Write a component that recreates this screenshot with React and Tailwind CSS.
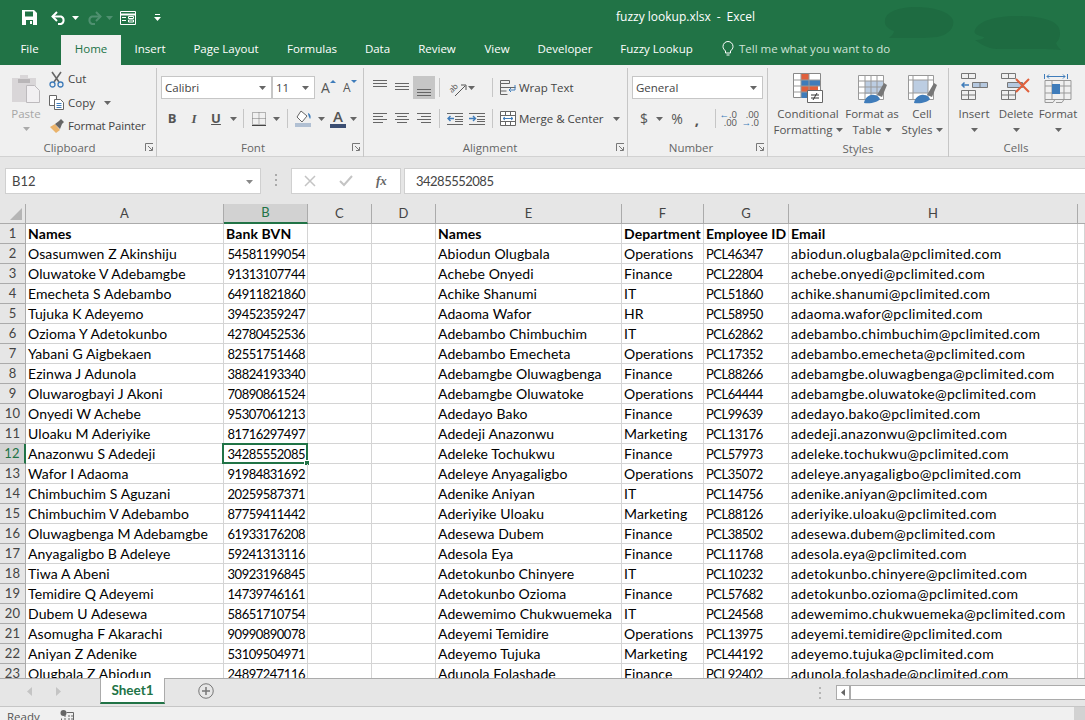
import React from "react";

const left = [
  ["Osasumwen Z Akinshiju", "54581199054"],
  ["Oluwatoke V Adebamgbe", "91313107744"],
  ["Emecheta S Adebambo", "64911821860"],
  ["Tujuka K Adeyemo", "39452359247"],
  ["Ozioma Y Adetokunbo", "42780452536"],
  ["Yabani G Aigbekaen", "82551751468"],
  ["Ezinwa J Adunola", "38824193340"],
  ["Oluwarogbayi J Akoni", "70890861524"],
  ["Onyedi W Achebe", "95307061213"],
  ["Uloaku M Aderiyike", "81716297497"],
  ["Anazonwu S Adedeji", "34285552085"],
  ["Wafor I Adaoma", "91984831692"],
  ["Chimbuchim S Aguzani", "20259587371"],
  ["Chimbuchim V Adebambo", "87759411442"],
  ["Oluwagbenga M Adebamgbe", "61933176208"],
  ["Anyagaligbo B Adeleye", "59241313116"],
  ["Tiwa A Abeni", "30923196845"],
  ["Temidire Q Adeyemi", "14739746161"],
  ["Dubem U Adesewa", "58651710754"],
  ["Asomugha F Akarachi", "90990890078"],
  ["Aniyan Z Adenike", "53109504971"],
  ["Olugbala Z Abiodun", "24897247116"],
];

const right = [
  ["Abiodun Olugbala", "Operations", "PCL46347", "abiodun.olugbala"],
  ["Achebe Onyedi", "Finance", "PCL22804", "achebe.onyedi"],
  ["Achike Shanumi", "IT", "PCL51860", "achike.shanumi"],
  ["Adaoma Wafor", "HR", "PCL58950", "adaoma.wafor"],
  ["Adebambo Chimbuchim", "IT", "PCL62862", "adebambo.chimbuchim"],
  ["Adebambo Emecheta", "Operations", "PCL17352", "adebambo.emecheta"],
  ["Adebamgbe Oluwagbenga", "Finance", "PCL88266", "adebamgbe.oluwagbenga"],
  ["Adebamgbe Oluwatoke", "Operations", "PCL64444", "adebamgbe.oluwatoke"],
  ["Adedayo Bako", "Finance", "PCL99639", "adedayo.bako"],
  ["Adedeji Anazonwu", "Marketing", "PCL13176", "adedeji.anazonwu"],
  ["Adeleke Tochukwu", "Finance", "PCL57973", "adeleke.tochukwu"],
  ["Adeleye Anyagaligbo", "Operations", "PCL35072", "adeleye.anyagaligbo"],
  ["Adenike Aniyan", "IT", "PCL14756", "adenike.aniyan"],
  ["Aderiyike Uloaku", "Marketing", "PCL88126", "aderiyike.uloaku"],
  ["Adesewa Dubem", "Finance", "PCL38502", "adesewa.dubem"],
  ["Adesola Eya", "Finance", "PCL11768", "adesola.eya"],
  ["Adetokunbo Chinyere", "IT", "PCL10232", "adetokunbo.chinyere"],
  ["Adetokunbo Ozioma", "Finance", "PCL57682", "adetokunbo.ozioma"],
  ["Adewemimo Chukwuemeka", "IT", "PCL24568", "adewemimo.chukwuemeka"],
  ["Adeyemi Temidire", "Operations", "PCL13975", "adeyemi.temidire"],
  ["Adeyemo Tujuka", "Marketing", "PCL44192", "adeyemo.tujuka"],
  ["Adunola Folashade", "Finance", "PCL92402", "adunola.folashade"],
];

const Caret = ({ color = "#666" }) => (
  <svg width="7" height="4" viewBox="0 0 7 4"><path d="M0 0h7L3.500 4z" fill={color} /></svg>
);

const Launcher = () => (
  <svg width="9" height="9" viewBox="0 0 9 9" fill="none" stroke="#777">
    <path d="M.5 8V.5H8" />
    <path d="M3 3l4 4M4 7.500h3.500V4" />
  </svg>
);

// rows of short lines, used by the alignment buttons
const Lines = ({ rows, width = 15, height = 14 }) => (
  <svg width={width} height={height} viewBox={`0 0 ${width} ${height}`} stroke="#666">
    {rows.map(([y, a, b]) => (
      <path key={y} d={`M${a} ${y + 0.5}H${b}`} />
    ))}
  </svg>
);

const GroupLabel = ({ children, launcher = true, pad = "pr-[4px]" }) => (
  <div className={`relative flex h-[20px] items-center justify-center pt-[2px] text-[11.5px] text-[#666] ${pad}`}>
    {children}
    {launcher && (
      <span className="absolute right-[2px] top-[6px] flex">
        <Launcher />
      </span>
    )}
  </div>
);

const Sep = () => <div className="h-[19px] w-px bg-[#c6c6c6]" />;

const ClipboardGroup = () => (
  <div className="flex h-[89px] w-[157px] flex-col border-r border-[#c6c6c6]">
    <div className="flex flex-1">
      <div className="flex w-[49px] flex-col items-center pl-[3px] pt-[5px] text-[11.5px] text-[#a6a6a6]">
        <svg width="30" height="30" viewBox="0 0 30 30">
          <path d="M1 5h8V2h8v3h8v24H1z" fill="#d9d6d8" />
          <path d="M7 6h12v4H7z" fill="#b9b6b8" />
          <path d="M15.500 12.500h8l5 5v12h-13z" fill="#f2f0f2" stroke="#bdbabd" />
        </svg>
        <span className="mt-[3px] leading-[16px]">Paste</span>
        <span className="mt-[5px] flex"><Caret color="#aaa" /></span>
      </div>
      <div className="flex flex-col text-[11.5px] text-[#444]">
        <div className="flex h-[22px] items-center gap-[3px]">
          <svg width="16" height="17" viewBox="0 0 16 17" fill="none">
            <path d="M3 1l7 10M12 1L5 11" stroke="#666" strokeWidth="1.600" />
            <circle cx="3.500" cy="13.500" r="2.500" stroke="#3f7cba" strokeWidth="1.300" />
            <circle cx="11.500" cy="13.500" r="2.500" stroke="#3f7cba" strokeWidth="1.300" />
          </svg>
          Cut
        </div>
        <div className="flex h-[25px] items-center gap-[3px]">
          <svg width="16" height="15" viewBox="0 0 16 15" fill="#fff" stroke="#666">
            <path d="M.5.500h7v10h-7z" />
            <path d="M5.500 4.500h6l3 3v7h-9z" />
            <path d="M7.500 8.500h5M7.500 10.500h5M7.500 12.500h5" stroke="#3f7cba" />
          </svg>
          Copy
          <span className="ml-[6px] flex"><Caret /></span>
        </div>
        <div className="flex h-[22px] items-center gap-[3px] tracking-[-0.2px]">
          <svg width="16" height="15" viewBox="0 0 16 15">
            <path d="M1 8l5-3 5 6-4 3z" fill="#eab36b" />
            <path d="M6 5l4-3 2-2 3 3-2 2-2 5z" fill="#666" />
          </svg>
          Format Painter
        </div>
      </div>
    </div>
    <GroupLabel pad="pr-[17px]">Clipboard</GroupLabel>
  </div>
);

const Combo = ({ width, children }) => (
  <div className={`flex h-[23px] items-center justify-between border border-[#c6c6c6] bg-white pl-[3px] pr-[5px] text-[11.5px] text-[#444] ${width}`}>
    {children}
    <Caret />
  </div>
);

const FontGroup = () => (
  <div className="flex h-[89px] w-[207px] flex-col border-r border-[#c6c6c6] pl-[4px]">
    <div className="flex flex-1 flex-col pt-[8px]">
      <div className="flex items-center">
        <Combo width="w-[111px]">Calibri</Combo>
        <Combo width="w-[43px]">11</Combo>
        <span className="ml-[6px] flex w-[22px] items-start text-[14px] leading-[14px] text-[#555]">
          A<span className="mt-[-1px] h-0 w-0 border-x-[3px] border-b-[3px] border-x-transparent border-b-[#3f7cba]" />
        </span>
        <span className="flex items-start text-[12px] leading-[14px] text-[#555]">
          A<span className="mt-[-1px] h-0 w-0 border-x-[3px] border-t-[3px] border-x-transparent border-t-[#3f7cba]" />
        </span>
      </div>
      <div className="mt-[10px] flex h-[19px] items-center text-[13px] text-[#555]">
        <span className="w-[22px] text-center font-bold">B</span>
        <span className="w-[22px] text-center font-['Liberation_Serif',serif] font-bold italic">I</span>
        <span className="w-[22px] text-center font-bold underline">U</span>
        <span className="ml-[3px] mr-[6px] flex"><Caret /></span>
        <Sep />
        <svg className="ml-[8px]" width="14" height="14" viewBox="0 0 14 14" stroke="#777" strokeDasharray="1 1" fill="none">
          <path d="M.5 .5h13v12H.5zM.5 6.500h13M7 .5v12" />
          <path d="M0 13.500h14" strokeDasharray="none" stroke="#444" />
        </svg>
        <span className="mx-[7px] flex"><Caret /></span>
        <Sep />
        <svg className="ml-[7px]" width="18" height="17" viewBox="0 0 18 17">
          <path d="M6 1l6 5-5 6-5-5z" fill="#fff" stroke="#666" />
          <path d="M13 3c3 1 3 5 2 6-1-2-2-4-2-6" fill="#3f7cba" />
          <path d="M0 13h16v4H0z" fill="#b1c0d3" />
        </svg>
        <span className="ml-[5px] mr-[4px] flex"><Caret /></span>
        <span className="flex w-[18px] flex-col items-center text-[15px] font-semibold leading-[13px] text-[#555]">
          A<span className="mt-[1px] h-[4px] w-[16px] bg-[#3b4e72]" />
        </span>
        <span className="ml-[3px] flex"><Caret /></span>
      </div>
    </div>
    <GroupLabel pad="pr-[18px]">Font</GroupLabel>
  </div>
);

const AlignmentGroup = () => (
  <div className="flex h-[89px] w-[264px] flex-col border-r border-[#c6c6c6] pl-[5px]">
    <div className="flex flex-1 flex-col pt-[8px]">
      <div className="flex h-[23px] items-center">
        <span className="flex h-[23px] w-[22px] justify-center pt-[4px]"><Lines rows={[[0, 0, 14], [3, 0, 14], [6, 0, 14]]} /></span>
        <span className="flex h-[23px] w-[22px] justify-center pt-[5px]"><Lines rows={[[2, 0, 14], [5, 0, 14], [8, 0, 14]]} /></span>
        <span className="flex h-[23px] w-[22px] justify-center bg-[#c6c6c6] pt-[7px]"><Lines rows={[[6, 0, 14], [9, 0, 14], [12, 0, 14]]} /></span>
        <span className="ml-[4px] mr-[7px]"><Sep /></span>
        <svg className="overflow-visible" width="20" height="18" viewBox="0 0 20 18" fill="none" stroke="#666">
          <text x="1" y="11" transform="rotate(-45 7 8)" fontSize="8" fill="#555" stroke="none">ab</text>
          <path d="M8 17l10-10M14 6h5v5" stroke="#555" />
        </svg>
        <span className="ml-[1px] mr-[17px] flex"><Caret /></span>
        <Sep />
        <svg className="ml-[7px]" width="16" height="15" viewBox="0 0 16 15" fill="none" stroke="#666">
          <path d="M.5.500h9v3h-9zM.5 3.500v11h7M.5 7.500h15M.5 11h6" />
          <path d="M15 5v5H9M11 8l-2 2 2 2" stroke="#3f7cba" />
        </svg>
        <span className="ml-[3px] whitespace-nowrap text-[11.5px] text-[#444]">Wrap Text</span>
      </div>
      <div className="mt-[10px] flex h-[19px] items-center">
        <span className="flex w-[22px] justify-center pt-[3px]"><Lines rows={[[0, 0, 14], [3, 0, 10], [6, 0, 14], [9, 0, 10]]} /></span>
        <span className="flex w-[22px] justify-center pt-[3px]"><Lines rows={[[0, 0, 14], [3, 2, 12], [6, 0, 14], [9, 2, 12]]} /></span>
        <span className="flex w-[22px] justify-center pt-[3px]"><Lines rows={[[0, 0, 14], [3, 4, 14], [6, 0, 14], [9, 4, 14]]} /></span>
        <span className="ml-[4px] mr-[7px]"><Sep /></span>
        <svg width="16" height="12" viewBox="0 0 16 12" stroke="#666" fill="none">
          <path d="M0 .5h16M8 3.500h8M8 6.500h8M8 8.500h8M0 11.500h16" />
          <path d="M7 5.500H1M3.500 3L1 5.500 3.500 8" stroke="#3f7cba" strokeWidth="1.400" />
        </svg>
        <svg className="ml-[6px]" width="16" height="12" viewBox="0 0 16 12" stroke="#666" fill="none">
          <path d="M0 .5h16M8 3.500h8M8 6.500h8M8 8.500h8M0 11.500h16" />
          <path d="M0 5.500h6M4 3l2.500 2.500L4 8" stroke="#3f7cba" strokeWidth="1.400" />
        </svg>
        <span className="mx-[7px]"><Sep /></span>
        <svg width="16" height="15" viewBox="0 0 16 15" fill="#fff" stroke="#666">
          <path d="M.5.500h15v14H.5zM.5 4.500h15M.5 10.500h15M5.500.5v4M10.500.5v4M5.500 10.500v4M10.500 10.500v4" />
          <path d="M3 7.500h10M5 6l-2 1.500L5 9M11 6l2 1.500L11 9" stroke="#3f7cba" fill="none" />
        </svg>
        <span className="ml-[3px] whitespace-nowrap text-[11.5px] text-[#444]">Merge &amp; Center</span>
        <span className="ml-[9px] flex"><Caret /></span>
      </div>
    </div>
    <GroupLabel pad="pr-[16px]">Alignment</GroupLabel>
  </div>
);

const NumberGroup = () => (
  <div className="flex h-[89px] w-[140px] flex-col border-r border-[#c6c6c6] pl-[4px]">
    <div className="flex flex-1 flex-col pt-[8px]">
      <Combo width="w-[131px]">General</Combo>
      <div className="mt-[10px] flex h-[19px] items-center text-[#555]">
        <span className="ml-[5px] w-[14px] text-center text-[14px]">$</span>
        <span className="ml-[5px] mr-[6px] flex"><Caret /></span>
        <span className="w-[16px] text-center text-[14px]">%</span>
        <span className="ml-[9px] mr-[15px] w-[6px] text-center text-[15px] font-bold leading-[10px]">,</span>
        <Sep />
        <div className="ml-[3px] flex w-[18px] flex-col items-end whitespace-nowrap text-[9.5px] leading-[8px]">
          <span><span className="text-[#3f7cba]">←</span>.0</span>
          <span>.00</span>
        </div>
        <div className="ml-[7px] flex w-[15px] flex-col items-end whitespace-nowrap text-[9.5px] leading-[8px]">
          <span>.00</span>
          <span><span className="text-[#3f7cba]">→</span>.0</span>
        </div>
      </div>
    </div>
    <GroupLabel pad="pr-[17px]">Number</GroupLabel>
  </div>
);

const CondIcon = () => (
  <svg width="31" height="31" viewBox="0 0 31 31">
    <path d="M.5.500h27v24H.5z" fill="#fff" stroke="#888" />
    <path d="M8 1h8v6H8z" fill="#e0603c" />
    <path d="M8 7h19v6H8z" fill="#3f7cba" />
    <path d="M8 13h17v6H8z" fill="#e0603c" />
    <path d="M8 19h12v6H8z" fill="#3f7cba" />
    <path d="M.5 7h27M.5 13h27M.5 19h27M8 1v24M16 1v24" stroke="#999" fill="none" />
    <path d="M14.500 17.500h15v12h-15z" fill="#fff" stroke="#666" />
    <path d="M18 22h8M18 25h8M24 20l-4 7" stroke="#333" fill="none" />
  </svg>
);

const Brush = () => (
  <g>
    <path d="M19 22l7-12 3 2-5 12z" fill="#777" />
    <path d="M6 30c1-5 5-9 10-8 3 0 5 2 6 4-2 3-9 5-16 4z" fill="#3f7cba" />
  </g>
);

const TableIcon = () => (
  <svg width="29" height="31" viewBox="0 0 29 31">
    <path d="M.5 2.500h25v24H.5z" fill="#fff" stroke="#999" />
    <path d="M7 8h18v13H7z" fill="#bccde2" />
    <path d="M.5 8h25M.5 14h25M.5 20h25M7 3v23M13 3v23M19 3v23" stroke="#999" fill="none" />
    <Brush />
  </svg>
);

const CellStylesIcon = () => (
  <svg width="29" height="31" viewBox="0 0 29 31">
    <path d="M.5 2.500h25v24H.5z" fill="#fff" stroke="#999" />
    <path d="M5 7h15v13H5z" fill="#bccde2" />
    <path d="M.5 7h25M.5 20h25M5 3v23M20 3v23" stroke="#999" fill="none" />
    <Brush />
  </svg>
);

const InsertIcon = () => (
  <svg width="27" height="27" viewBox="0 0 27 27" fill="none" stroke="#777">
    <path d="M.5.500h14v5H.5zM7.500.5v5M.5 17.500h14v9H.5zM.5 22h14M7.500 17.500v9" />
    <path d="M11.500 9.500h15v5h-15zM19 9.500v5" fill="#b5c8df" />
    <path d="M8 12H1M3.500 9.500L1 12l2.500 2.500" stroke="#3f7cba" strokeWidth="1.500" />
  </svg>
);

const DeleteIcon = () => (
  <svg width="30" height="27" viewBox="0 0 30 27" fill="none" stroke="#777">
    <path d="M.5.500h14v5H.5zM7.500.5v5M.5 17.500h14v9H.5zM.5 22h14M7.500 17.500v9" />
    <path d="M6.500 9.500h15v5h-15z" fill="#b5c8df" />
    <path d="M15 6l13 13M28 6L15 19" stroke="#e0603c" strokeWidth="2" />
  </svg>
);

const FormatIcon = () => (
  <svg width="29" height="30" viewBox="0 0 29 30" fill="none" stroke="#999">
    <path d="M.5 1v5M23.500 1v5M3 3.500h18M5 1.500l-2 2 2 2M19 1.500l2 2-2 2" stroke="#3f7cba" />
    <path d="M1 7.500h26v19H1zM1 13h26M1 20h26M8 7.500v19M20 7.500v19" />
    <path d="M8 11h8v10H8z" fill="#3f7cba" stroke="none" />
    <path d="M1 26.500v3h8l2-3M12 29.500h6l2-3" />
  </svg>
);

const BigButton = ({ width, icon, lines, caret = "inline" }) => (
  <div className={`flex flex-col items-center pt-[5px] text-[11.5px] leading-[16px] text-[#555] ${width}`}>
    <div className="flex h-[32px] items-start">{icon}</div>
    <span className="mt-[1px] whitespace-nowrap">{lines[0]}</span>
    {caret === "inline" ? (
      <span className="flex items-center gap-[3px] whitespace-nowrap">
        {lines[1]}
        <Caret />
      </span>
    ) : (
      <span className="mt-[6px] flex"><Caret /></span>
    )}
  </div>
);

const StylesGroup = () => (
  <div className="flex h-[89px] w-[181px] flex-col border-r border-[#c6c6c6] pl-[8px]">
    <div className="flex flex-1">
      <BigButton width="w-[64px]" icon={<CondIcon />} lines={["Conditional", "Formatting"]} />
      <BigButton width="w-[60px] ml-[2px]" icon={<TableIcon />} lines={["Format as", "Table"]} />
      <BigButton width="w-[40px]" icon={<CellStylesIcon />} lines={["Cell", "Styles"]} />
    </div>
    <GroupLabel launcher={false} pad="pr-[8px]">Styles</GroupLabel>
  </div>
);

const CellsGroup = () => (
  <div className="flex h-[89px] flex-1 flex-col pl-[4px]">
    <div className="flex flex-1">
      <BigButton width="w-[42px]" icon={<InsertIcon />} lines={["Insert"]} caret="below" />
      <BigButton width="w-[42px]" icon={<DeleteIcon />} lines={["Delete"]} caret="below" />
      <BigButton width="w-[42px]" icon={<FormatIcon />} lines={["Format"]} caret="below" />
    </div>
    <GroupLabel launcher={false} pad="pr-[6px]">Cells</GroupLabel>
  </div>
);

const Clouds = () => (
  <svg className="absolute right-0 top-0" width="240" height="65" viewBox="0 0 240 65" fill="#1e6b41">
    <path d="M40 20c1-8 14-13 30-13 18 0 34 4 38 13 2 8-5 15-16 17-8 1-20 1-30 1H44c2-2 5-4 5-7-6-2-10-6-9-11z" />
    <path d="M130 30c4-9 20-14 42-14 20 0 38 3 42 12 2 6 1 11-3 15 1 3 3 5 5 7-8-1-14-1-20-1h-44c-6 0-14-3-22-9 6 0 9-1 9-3-6-2-11-3-9-7z" />
  </svg>
);

const tabs = [
  ["w-[58px]", "Insert"],
  ["w-[94px]", "Page Layout"],
  ["w-[78px]", "Formulas"],
  ["w-[53px]", "Data"],
  ["w-[66px]", "Review"],
  ["w-[54px]", "View"],
  ["w-[82px]", "Developer"],
  ["w-[101px]", "Fuzzy Lookup"],
];

const TitleBar = () => (
  <div className="relative h-[65px] bg-[#217346] text-white">
    <Clouds />
    <div className="relative flex h-[35px] items-center">
      <svg className="ml-[22px]" width="15" height="15" viewBox="0 0 15 15">
        <path d="M0 0h12l3 3v12H0z" fill="#fff" />
        <path d="M3 1.500h8v5H3z" fill="#217346" />
        <path d="M4 10h7v5H4z" fill="#217346" />
        <path d="M8 11h2v3H8z" fill="#fff" />
      </svg>
      <svg className="ml-[14px]" width="16" height="14" viewBox="0 0 16 14" fill="none" stroke="#fff" strokeWidth="2">
        <path d="M1.500 5.500h8.500a4 4 0 0 1 0 7.500H7" />
        <path d="M6 1L1.500 5.500 6 10" />
      </svg>
      <span className="ml-[5px] flex"><Caret color="#fff" /></span>
      <svg className="ml-[7px]" width="16" height="14" viewBox="0 0 16 14" fill="none" stroke="#4f9070" strokeWidth="2">
        <path d="M14.500 5.500H6a4 4 0 0 0 0 7.500h3" />
        <path d="M10 1l4.500 4.500L10 10" />
      </svg>
      <span className="ml-[4px] flex"><Caret color="#4f9070" /></span>
      <svg className="ml-[7px]" width="16" height="14" viewBox="0 0 16 14" fill="none" stroke="#fff">
        <path d="M.5.500h15v13H.5z" />
        <path d="M1 3.500h14" strokeWidth="2" />
        <path d="M2 6.500h4M2 9.500h4M8.500 5.500h5v2h-5zM8.500 9h5v2h-5z" />
      </svg>
      <span className="ml-[18px] flex flex-col items-center gap-[2px]">
        <span className="h-px w-[5px] bg-white" />
        <Caret color="#fff" />
      </span>
      <div className="absolute left-[616px] top-[8px] flex gap-[6px] whitespace-nowrap text-[12px] leading-[17px]">
        <span>fuzzy lookup.xlsx</span>
        <span>-</span>
        <span>Excel</span>
      </div>
    </div>
    <div className="relative flex h-[30px] items-start text-[11.5px] leading-[28px]">
      <div className="ml-[6px] w-[47px] text-center">File</div>
      <div className="ml-[8px] h-[30px] w-[60px] bg-[#f0f0f0] text-center text-[#217346]">Home</div>
      {tabs.map(([w, name]) => (
        <div key={name} className={`text-center ${w}`}>{name}</div>
      ))}
      <svg className="ml-[15px] mt-[6px]" width="12" height="15" viewBox="0 0 12 15" fill="none" stroke="#fff">
        <path d="M3.500 10C2 8.500 1 7.500 1 5.500a5 5 0 0 1 10 0c0 2-1 3-2.500 4.500v2h-5zM4.500 14h3" />
      </svg>
      <span className="ml-[5px] text-[#cfe3d8]">Tell me what you want to do</span>
    </div>
  </div>
);

const Ribbon = () => (
  <div className="h-[92px] border-b border-[#d2d2d2] bg-[#f0f0f0] pt-[3px]">
    <div className="flex">
      <ClipboardGroup />
      <FontGroup />
      <AlignmentGroup />
      <NumberGroup />
      <StylesGroup />
      <CellsGroup />
    </div>
  </div>
);

const FormulaBar = () => (
  <div className="flex h-[47px] items-start bg-[#e6e6e6] pl-[5px] pt-[11px] text-[13px] text-[#444]">
    <div className="flex h-[26px] w-[256px] items-center justify-between border border-[#d0d0d0] bg-white pl-[6px] pr-[7px] pt-px font-['Lato',sans-serif]">
      B12
      <Caret color="#888" />
    </div>
    <div className="mx-[14px] mt-[6px] flex w-[2px] flex-col gap-[3px]">
      <span className="h-[2px] bg-[#aaa]" />
      <span className="h-[2px] bg-[#aaa]" />
      <span className="h-[2px] bg-[#aaa]" />
    </div>
    <div className="flex h-[26px] w-[110px] items-center border border-[#d0d0d0] bg-white pl-[12px]">
      <svg width="12" height="12" viewBox="0 0 12 12" stroke="#c4c4c4" strokeWidth="1.500"><path d="M1 1l10 10M11 1L1 11" /></svg>
      <svg className="ml-[23px]" width="14" height="12" viewBox="0 0 14 12" fill="none" stroke="#c4c4c4" strokeWidth="2"><path d="M1 6l4 4 8-9" /></svg>
      <span className="ml-[23px] font-['Liberation_Serif',serif] text-[13px] font-bold italic text-[#666]">fx</span>
    </div>
    <div className="ml-[3px] flex h-[26px] flex-1 items-center border border-r-0 border-[#d0d0d0] bg-white pl-[11px] pt-px font-['Lato',sans-serif] tracking-[-0.5px]">
      34285552085
    </div>
  </div>
);

const colClass = "grid-cols-[26px_198px_84px_64px_64px_186px_82px_85px_289px_1fr]";
const cell = "flex h-[20px] items-center whitespace-nowrap border-b border-r border-[#d4d4d4] pl-[2px]";
const digits = "pt-[2px] text-[13px] tracking-[-0.5px]";
const rowHead = "flex h-[20px] items-center justify-center border-b border-r border-[#ababab] bg-[#e6e6e6] pt-px text-[13px] text-[#444]";

const Sheet = () => {
  const columns = ["A", "B", "C", "D", "E", "F", "G", "H"];
  const header = ["Names", "Bank BVN", "", "", "Names", "Department", "Employee ID", "Email", ""];

  return (
    <div className="min-h-0 flex-1 overflow-hidden bg-white font-['Lato',sans-serif] text-[14px] tracking-[0.1px] text-black">
      <div className={`grid ${colClass}`}>
        <div className="flex h-[20px] items-end justify-end border-b border-r border-[#ababab] bg-[#e6e6e6] pb-[3px] pr-[3px]">
          <span className="h-0 w-0 border-b-[12px] border-l-[12px] border-b-[#b5b5b5] border-l-transparent" />
        </div>
        {columns.map((c) => (
          <div
            key={c}
            className={
              c === "B"
                ? "flex h-[20px] items-center justify-center border-b-2 border-r border-[#217346] border-r-[#ababab] bg-[#d2d2d2] text-[13px] text-[#217346]"
                : "flex h-[20px] items-center justify-center border-b border-r border-[#ababab] bg-[#e6e6e6] text-[13px] text-[#444]"
            }
          >
            {c}
          </div>
        ))}
        <div className="h-[20px] border-b border-[#ababab] bg-[#e6e6e6]" />

        <div className={rowHead}>1</div>
        {header.map((h, i) => (
          <div key={i} className={`${cell} font-bold`}>{h}</div>
        ))}

        {left.map(([name, bvn], i) => {
          const row = i + 2;
          const active = row === 12;
          const [n, dept, id, mail] = right[i];
          return (
            <React.Fragment key={row}>
              <div
                className={
                  active
                    ? "flex h-[20px] items-center justify-center border-b border-r-2 border-[#ababab] border-r-[#217346] bg-[#d2d2d2] pt-px text-[13px] text-[#217346]"
                    : rowHead
                }
              >
                {row}
              </div>
              <div className={cell}>{name}</div>
              <div className={`${cell} ${digits} relative justify-end pr-[2px]`}>
                {bvn}
                {active && (
                  <span className="absolute bottom-[-1px] left-[-2px] right-[-1px] top-[-1px] border-2 border-[#217346]">
                    <span className="absolute bottom-[-4px] right-[-4px] h-[6px] w-[6px] border border-white bg-[#217346]" />
                  </span>
                )}
              </div>
              <div className={cell} />
              <div className={cell} />
              <div className={cell}>{n}</div>
              <div className={cell}>{dept}</div>
              <div className={`${cell} ${digits}`}>{id}</div>
              <div className={`${cell} tracking-[0.3px]`}>{mail}@pclimited.com</div>
              <div className={cell} />
            </React.Fragment>
          );
        })}
      </div>
    </div>
  );
};

const SheetTabs = () => (
  <div className="flex h-[28px] items-start border-t border-[#ababab] bg-[#e6e6e6]">
    <svg className="ml-[27px] mt-[8px]" width="5" height="9" viewBox="0 0 5 9"><path d="M5 0v9L0 4.500z" fill="#c4c4c4" /></svg>
    <svg className="ml-[24px] mt-[8px]" width="5" height="9" viewBox="0 0 5 9"><path d="M0 0v9l5-4.500z" fill="#c4c4c4" /></svg>
    <div className="ml-[39px] mt-[-1px] flex h-[26px] w-[65px] items-center justify-center border-x border-b-2 border-[#ababab] border-b-[#217346] bg-white font-['Lato',sans-serif] text-[13.5px] font-bold text-[#217346]">
      Sheet1
    </div>
    <svg className="ml-[33px] mt-[4px]" width="16" height="16" viewBox="0 0 16 16" fill="none" stroke="#777">
      <circle cx="8" cy="8" r="7.250" />
      <path d="M8 4v8M4 8h8" strokeWidth="1.500" />
    </svg>
    <div className="ml-[605px] mt-[8px] flex w-[2px] flex-col gap-[3px]">
      <span className="h-[2px] bg-[#b5b5b5]" />
      <span className="h-[2px] bg-[#b5b5b5]" />
      <span className="h-[2px] bg-[#b5b5b5]" />
    </div>
    <div className="ml-[15px] mt-[6px] flex h-[15px] flex-1 border border-r-0 border-[#ababab] bg-white">
      <span className="flex w-[14px] items-center justify-center border-r-2 border-[#ababab]">
        <svg width="4" height="7" viewBox="0 0 4 7"><path d="M4 0v7L0 3.500z" fill="#666" /></svg>
      </span>
    </div>
  </div>
);

const StatusBar = () => (
  <div className="flex h-[14px] items-start border-t border-[#c6c6c6] bg-[#f0f0f0] text-[11.5px] leading-[16px] text-[#555]">
    <span className="ml-[7px] mt-[2px]">Ready</span>
    <svg className="ml-[20px] mt-[3px]" width="14" height="13" viewBox="0 0 14 13">
      <circle cx="3.500" cy="3" r="3" fill="#666" />
      <path d="M6.500 2.500h7v9h-12v-3" fill="none" stroke="#666" />
      <path d="M4 6h2M8 6h2M11 6h2M4 9h2M8 9h2M11 9h2" stroke="#666" />
    </svg>
    <span className="ml-auto h-[13px] w-[11px] bg-[#d2d2d2]" />
  </div>
);

export default function App() {
  return (
    <div className="flex h-[720px] w-[1085px] flex-col overflow-hidden font-['Open_Sans',sans-serif]">
      <TitleBar />
      <Ribbon />
      <FormulaBar />
      <Sheet />
      <SheetTabs />
      <StatusBar />
    </div>
  );
}
